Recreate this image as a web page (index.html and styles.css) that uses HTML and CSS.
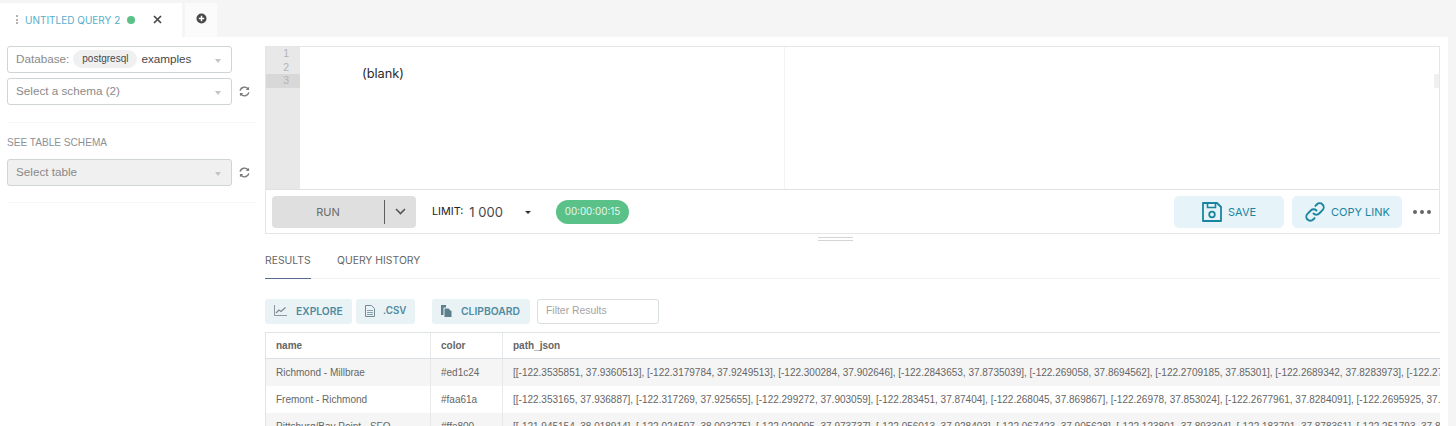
FILE: index.html
```html
<!DOCTYPE html>
<html lang="en">
<head>
<meta charset="utf-8">
<title>SQL Lab</title>
<link rel="stylesheet" href="styles.css">
</head>
<body>
<div class="tabbar">
  <div class="tab">
    <span class="grip"><i></i><i></i><i></i></span>
    <span class="tab-title">UNTITLED QUERY 2</span>
    <span class="tab-dot"></span>
    <svg class="tab-close" width="9" height="9" viewBox="0 0 9 9"><path d="M1 1l7 7M8 1l-7 7" stroke="#484848" stroke-width="1.7" fill="none"/></svg>
  </div>
  <div class="tab-add">
    <svg width="11" height="11" viewBox="0 0 11 11"><circle cx="5.5" cy="5.5" r="5" fill="#484848"/><path d="M5.5 2.8v5.4M2.8 5.5h5.4" stroke="#fff" stroke-width="1.5"/></svg>
  </div>
</div>
<div class="main">
  <aside class="side">
    <div class="select-row">
      <div class="select">
        <span class="muted">Database:</span><span class="pill">postgresql</span><span class="value">examples</span>
        <span class="caret"></span>
      </div>
    </div>
    <div class="select-row">
      <div class="select">
        <span class="muted">Select a schema (2)</span>
        <span class="caret"></span>
      </div>
      <svg class="refresh" width="11" height="11" viewBox="0 0 12 12"><path d="M1.2 5A5 5 0 0 1 10 3.2M10.8 7A5 5 0 0 1 2 8.8" stroke="#7b7b7b" stroke-width="1.6" fill="none"/><path d="M11 .8v3.6H7.4zM1 11.2V7.6h3.6z" fill="#7b7b7b"/></svg>
    </div>
    <div class="rule first-rule"></div>
    <div class="side-label">SEE TABLE SCHEMA</div>
    <div class="select-row">
      <div class="select disabled">
        <span class="muted">Select table</span>
        <span class="caret"></span>
      </div>
      <svg class="refresh" width="11" height="11" viewBox="0 0 12 12"><path d="M1.2 5A5 5 0 0 1 10 3.2M10.8 7A5 5 0 0 1 2 8.8" stroke="#7b7b7b" stroke-width="1.6" fill="none"/><path d="M11 .8v3.6H7.4zM1 11.2V7.6h3.6z" fill="#7b7b7b"/></svg>
    </div>
    <div class="rule last-rule"></div>
  </aside>
  <section class="work">
    <div class="editor-card">
      <div class="editor">
        <div class="gutter">
          <div class="ln">1</div>
          <div class="ln">2</div>
          <div class="ln active">3</div>
        </div>
        <div class="code"><span class="blank">(blank)</span></div>
        <div class="scroll-thumb"></div>
      </div>
      <div class="toolbar">
        <div class="run">
          <span class="run-label">RUN</span>
          <span class="run-sep"></span>
          <svg class="run-chev" width="11" height="7" viewBox="0 0 11 7"><path d="M1 1l4.5 4.5L10 1" stroke="#555" stroke-width="1.6" fill="none"/></svg>
        </div>
        <div class="limit"><b>LIMIT:</b><span class="limit-val">1 000</span><span class="limit-caret"></span></div>
        <div class="timer">00:00:00:15</div>
        <div class="spacer"></div>
        <div class="act save">
          <svg width="20" height="20" viewBox="0 0 20 20"><path d="M1 1h14l4 4v14H1z" fill="none" stroke="#1a85a0" stroke-width="1.8" stroke-linejoin="round"/><path d="M5.5 1v4.5h8V1" fill="none" stroke="#1a85a0" stroke-width="1.6"/><circle cx="10" cy="12.5" r="2.8" fill="none" stroke="#1a85a0" stroke-width="1.8"/></svg>
          <span>SAVE</span>
        </div>
        <div class="act copy">
          <svg width="20" height="20" viewBox="0 0 20 20"><path d="M8.5 11.5a4 4 0 0 0 5.7 0l3.3-3.3a4 4 0 0 0-5.7-5.7L10.4 3.9" fill="none" stroke="#1a85a0" stroke-width="1.9" stroke-linecap="round"/><path d="M11.5 8.5a4 4 0 0 0-5.7 0l-3.3 3.3a4 4 0 0 0 5.7 5.7l1.4-1.4" fill="none" stroke="#1a85a0" stroke-width="1.9" stroke-linecap="round"/></svg>
          <span>COPY LINK</span>
        </div>
        <div class="more"><i></i><i></i><i></i></div>
      </div>
    </div>
    <div class="handle"></div>
    <div class="tabs">
      <div class="rtab on">RESULTS</div>
      <div class="rtab">QUERY HISTORY</div>
    </div>
    <div class="actions">
      <div class="btn b-explore">
        <svg width="13" height="11" viewBox="0 0 13 11"><path d="M.5 0v10.5H13" stroke="#8a9aa0" fill="none"/><path d="M2 8l3-3 2 1.5L11.500 2.500" stroke="#7c8b91" stroke-width="1.300" fill="none"/></svg>
        <span>EXPLORE</span>
      </div>
      <div class="btn b-csv">
        <svg width="10" height="12" viewBox="0 0 10 12"><path d="M.5.500h6l3 3v8h-9z" fill="none" stroke="#6e8a94"/><path d="M2 5.500h6M2 7.500h6M2 9.500h6" stroke="#6e8a94" stroke-width=".8"/></svg>
        <span>.CSV</span>
      </div>
      <div class="btn b-clip">
        <svg width="11" height="12" viewBox="0 0 11 12"><path d="M0 0h5v2.500h-2.500V10H0z" fill="#5d7f8c"/><path d="M3.500 3.500h4l3 3V12h-7z" fill="#5d7f8c"/></svg>
        <span>CLIPBOARD</span>
      </div>
      <div class="filter">Filter Results</div>
    </div>
    <div class="grid">
      <div class="row head">
        <div class="c c1">name</div><div class="c c2">color</div><div class="c c3">path_json</div>
      </div>
      <div class="row odd">
        <div class="c c1">Richmond - Millbrae</div><div class="c c2">#ed1c24</div><div class="c c3">[[-122.3535851, 37.9360513], [-122.3179784, 37.9249513], [-122.300284, 37.902646], [-122.2843653, 37.8735039], [-122.269058, 37.8694562], [-122.2709185, 37.85301], [-122.2689342, 37.8283973], [-122.2709185, 37.8</div>
      </div>
      <div class="row">
        <div class="c c1">Fremont - Richmond</div><div class="c c2">#faa61a</div><div class="c c3">[[-122.353165, 37.936887], [-122.317269, 37.925655], [-122.299272, 37.903059], [-122.283451, 37.87404], [-122.268045, 37.869867], [-122.26978, 37.853024], [-122.2677961, 37.8284091], [-122.2695925, 37.8</div>
      </div>
      <div class="row odd">
        <div class="c c1">Pittsburg/Bay Point - SFO</div><div class="c c2">#ffe800</div><div class="c c3">[[-121.945154, 38.018914], [-122.024597, 38.003275], [-122.029095, 37.973737], [-122.056013, 37.928403], [-122.067423, 37.905628], [-122.123801, 37.893394], [-122.183791, 37.878361], [-122.251793, 37.844601]</div>
      </div>
    </div>
  </section>
</div>
</body>
</html>
```
FILE: styles.css
```css
* { box-sizing: border-box; }
html, body { margin: 0; height: 426px; overflow: hidden; }
body { background: #f5f5f5; font-family: Inter, "Liberation Sans", sans-serif; color: #484848; }

.tabbar { height: 37px; display: flex; align-items: flex-end; background: #f5f5f5; }
.tab { width: 182px; height: 34px; background: #fff; display: flex; align-items: center; padding-left: 16px; padding-bottom: 1px; }
.grip { display: flex; flex-direction: column; gap: 1.5px; width: 3px; margin-right: 6px; }
.grip i { width: 2px; height: 2px; background: #999; border-radius: 50%; }
.tab-title { font-size: 10px; color: #58aecb; white-space: nowrap; width: 102px; }
.tab-dot { width: 8px; height: 8px; border-radius: 50%; background: #5ac189; }
.tab-close { margin-left: 18px; }
.tab-add { width: 32px; height: 34px; margin-left: 3px; background: #fbfbfb; display: flex; align-items: center; justify-content: center; padding-bottom: 3px; }

.main { width: 1448px; height: 389px; background: #fff; display: flex; overflow: hidden; }

.side { width: 265px; flex: none; padding: 9px 8px 0 7px; font-family: "Liberation Sans", sans-serif; }
.select-row { display: flex; align-items: center; margin-bottom: 5px; }
.select { width: 225px; height: 27px; border: 1px solid #cfd4d6; border-radius: 3px; padding: 0 0 2px 8px; display: flex; align-items: center; font-size: 11.7px; position: relative; background: #fff; flex: none; }
.select.disabled { background: #f0f0f0; }
.muted { color: #8a8a8a; white-space: nowrap; }
.pill { background: #f0f0f0; border-radius: 10px; padding: 0 9px; height: 18px; line-height: 18px; font-size: 10px; color: #484848; margin: 1px 0 0 4px; }
.value { margin-left: 4px; color: #484848; }
.caret { position: absolute; right: 10px; top: 12px; border: 3.5px solid transparent; border-top: 4px solid #c4c4c4; border-bottom: 0; }
.refresh { margin-left: 7px; flex: none; }
.rule { height: 1px; background: #f6f6f6; width: 250px; }
.first-rule { margin-top: 17px; }
.last-rule { margin-top: 16px; }
.side-label { font-size: 10.1px; color: #8b9197; margin: 14px 0 11px 0; line-height: 11px; }

.work { width: 1175px; flex: none; padding-top: 9px; }
.editor-card { width: 1175px; height: 188px; border: 1px solid #e3e7ea; display: flex; flex-direction: column; }
.editor { height: 143px; display: flex; border-bottom: 1px solid #dfe3e6; position: relative; flex: none; }
.gutter { width: 34px; background: #e8e8e8; font-size: 10.5px; color: #b4b4b4; flex: none; }
.ln { height: 13.5px; line-height: 13.5px; text-align: right; padding-right: 11px; font-family: "Liberation Sans", sans-serif; }
.ln.active { background: #d8d8d8; height: 14px; }
.code { flex: 1; position: relative; }
.code::after { content: ""; position: absolute; left: 484px; top: 0; bottom: 0; width: 1px; background: #f3f3f3; }
.blank { position: absolute; left: 62px; top: 19px; font-size: 12.8px; color: #2c2c2c; line-height: 16px; }
.scroll-thumb { position: absolute; right: 0; top: 27px; width: 5px; height: 14px; background: #f0f0f0; }

.toolbar { flex: 1; display: flex; align-items: center; padding: 0 8px 0 6px; }
.run { width: 144px; height: 32px; background: #dfdfdf; border-radius: 4px; display: flex; align-items: center; flex: none; }
.run-label { width: 112px; text-align: center; font-size: 11px; color: #6a6a6a; }
.run-sep { width: 1px; height: 24px; background: #5e5e5e; }
.run-chev { margin-left: 10px; }
.limit { display: flex; align-items: center; margin-left: 16px; width: 124px; flex: none; position: relative; color: #222; }
.limit b { font-weight: 400; font-size: 10.8px; }
.limit-val { font-size: 13px; margin-left: 6px; color: #484848; }
.limit-caret { position: absolute; left: 93px; top: 7px; border: 3px solid transparent; border-top: 3.5px solid #333; border-bottom: 0; }
.timer { width: 73px; height: 24px; border-radius: 12px; background: #5ac189; color: #e8f7ee; font-size: 9.8px; text-align: center; line-height: 24px; flex: none; }
.spacer { flex: 1; }
.act { width: 110px; height: 32px; background: #e6f3f8; border-radius: 5px; display: flex; align-items: center; font-size: 11px; color: #1a85a0; flex: none; white-space: nowrap; }
.act svg { flex: none; }
.save { padding-left: 28px; gap: 6px; }
.copy { margin-left: 8px; padding-left: 13px; gap: 6px; }
.more { display: flex; gap: 3px; margin-left: 11px; }
.more i { width: 4px; height: 4px; border-radius: 50%; background: #666; }

.handle { width: 35px; height: 4px; margin: 3px 0 0 553px; border-top: 1px solid #d4d4d4; border-bottom: 1px solid #d4d4d4; }
.tabs { display: flex; height: 35px; margin-top: 3px; border-bottom: 1px solid #f2f2f2; width: 1175px; }
.rtab { font-size: 10.4px; color: #666; line-height: 11px; padding-top: 11px; margin-right: 26px; height: 35px; }
.rtab.on { border-bottom: 1px solid #5c6a95; width: 46px; }
.actions { display: flex; align-items: center; margin-top: 20px; height: 25px; }
.btn { height: 25px; border-radius: 3px; background: #e9f3f6; display: flex; align-items: center; padding-bottom: 2px; font-size: 10.3px; font-weight: 600; color: #4f8a9e; flex: none; }
.b-explore { width: 87px; padding-left: 9px; gap: 9px; }
.b-csv { width: 59px; margin-left: 4px; padding-left: 9px; gap: 8px; font-size: 9.8px; }
.b-clip { width: 98px; margin-left: 17px; padding-left: 9px; gap: 9px; }
.filter { width: 122px; height: 25px; margin-left: 7px; border: 1px solid #d9dee0; border-radius: 3px; font-family: "Liberation Sans", sans-serif; font-size: 10.4px; color: #a4a4a4; line-height: 22px; padding-left: 8px; }

.grid { margin-top: 8px; width: 1175px; border-top: 1px solid #dfe4e6; border-left: 1px solid #dfe4e6; overflow: hidden; font-family: "Liberation Sans", sans-serif; }
.row { display: flex; height: 27px; font-size: 10px; color: #666; align-items: center; white-space: nowrap; }
.row.head { height: 26px; font-weight: 700; color: #666; border-bottom: 1px solid #dbe0e4; }
.row.odd { background: #f5f5f5; }
.c { height: 100%; padding-left: 10px; display: flex; align-items: center; border-right: 1px solid #e6eaec; flex: none; overflow: hidden; }
.c1 { width: 165px; }
.c2 { width: 72px; }
.c3 { width: 937px; border-right: 0; }
```
